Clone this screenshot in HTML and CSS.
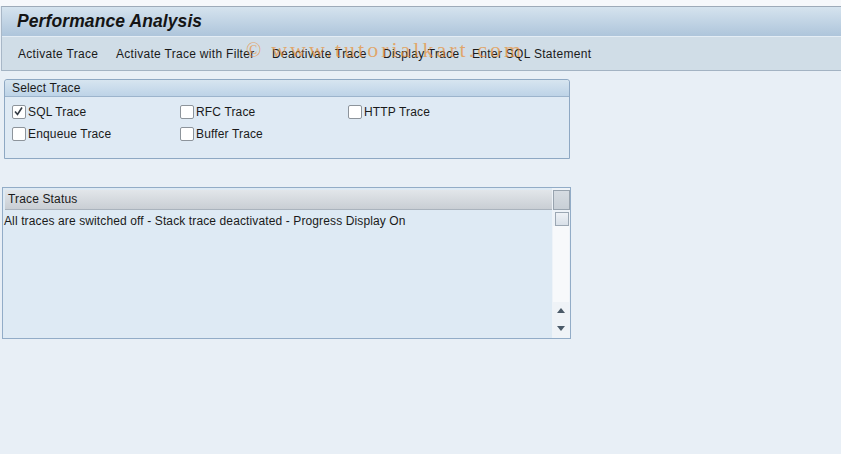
FILE: index.html
```html
<!DOCTYPE html>
<html>
<head>
<meta charset="utf-8">
<title>Performance Analysis</title>
<link rel="stylesheet" href="styles.css">
</head>
<body>
<div class="topgap"></div>
<div class="header">
  <div class="titlebar"><h1 class="title">Performance Analysis</h1></div>
  <div class="toolbar">
    <span class="tool">Activate Trace</span>
    <span class="tool">Activate Trace with Filter</span>
    <span class="tool">Deactivate Trace</span>
    <span class="tool">Display Trace</span>
    <span class="tool">Enter SQL Statement</span>
  </div>
</div>

<div class="content">
  <section class="group">
    <div class="group-head">Select Trace</div>
    <div class="group-body">
      <label class="cb"><span class="box checked"><svg viewBox="0 0 13 13" width="13" height="13"><path d="M3 6.5 L5.5 9.5 L10 2.5" fill="none" stroke="#333b44" stroke-width="1.6"/></svg></span>SQL Trace</label>
      <label class="cb"><span class="box"></span>RFC Trace</label>
      <label class="cb"><span class="box"></span>HTTP Trace</label>
      <label class="cb"><span class="box"></span>Enqueue Trace</label>
      <label class="cb"><span class="box"></span>Buffer Trace</label>
    </div>
  </section>

  <section class="status">
    <div class="status-main">
      <div class="status-head">Trace Status</div>
      <div class="status-line">All traces are switched off - Stack trace deactivated - Progress Display On</div>
    </div>
    <div class="scroll">
      <div class="scroll-corner"></div>
      <div class="scroll-thumb"></div>
      <div class="scroll-track"></div>
      <div class="scroll-btn"><span class="arrow-up"></span></div>
      <div class="scroll-btn"><span class="arrow-down"></span></div>
    </div>
  </section>
</div>

<div class="watermark"><span class="copy">©</span><span class="wm-url">www.tutorialkart.com</span></div>
</body>
</html>
```

FILE: styles.css
```css
html, body {
  margin: 0;
  padding: 0;
}
body {
  width: 841px;
  height: 454px;
  background: #e8eff6;
  font-family: "Liberation Sans", Arial, sans-serif;
  font-size: 12px;
  letter-spacing: 0.15px;
  color: #1a1a1a;
  overflow: hidden;
  position: relative;
}
.topgap {
  height: 6px;
  background: #f6f8fb;
}
.header {
  margin-left: 1px;
  border-top: 1px solid #9eabb9;
  border-left: 1px solid #a8b7c7;
  border-bottom: 1px solid #a3b3c3;
}
.titlebar {
  height: 29px;
  background: linear-gradient(#d5e3ee, #aec5db);
  display: flex;
  align-items: center;
  padding-left: 15px;
}
.title {
  margin: 0;
  font-size: 17.5px;
  font-weight: bold;
  font-style: italic;
  color: #141414;
  letter-spacing: 0.1px;
}
.toolbar {
  border-top: 1px solid #e4edf5;
  height: 33px;
  background: #d0dde7;
  display: grid;
  grid-template-columns: 98px 156px 111px 89px auto;
  align-items: center;
  padding-left: 16px;
}
.tool {
  color: #1a1a1a;
  white-space: nowrap;
  letter-spacing: 0.3px;
}
.content {
  padding: 8px 0 0 0;
}
.group {
  margin-left: 4px;
  width: 564px;
  height: 78px;
  border: 1px solid #8ea8c3;
  border-radius: 3px 3px 0 0;
  background: #dfeaf4;
}
.group-head {
  height: 16px;
  line-height: 16px;
  padding-left: 7px;
  background: linear-gradient(#d7e5f0, #bdd3e7);
  border-bottom: 1px solid #9cb4cc;
  border-radius: 3px 3px 0 0;
}
.group-body {
  display: grid;
  grid-template-columns: 168px 168px auto;
  grid-auto-rows: 22px;
  padding: 8px 0 0 7px;
}
.cb {
  display: flex;
  align-items: center;
  height: 14px;
}
.box {
  width: 12px;
  height: 12px;
  border: 1px solid #8d949b;
  border-radius: 2px;
  background: #fff;
  margin-right: 2px;
  flex: none;
  position: relative;
}
.box svg {
  position: absolute;
  left: -1px;
  top: -1px;
}
.status {
  margin: 28px 0 0 2px;
  width: 567px;
  height: 150px;
  border: 1px solid #92acc7;
  background: #deeaf4;
  display: flex;
}
.status-main {
  flex: 1;
  padding-top: 2px;
}
.status-head {
  margin-left: 2px;
  height: 19px;
  line-height: 19px;
  padding-left: 3px;
  background: linear-gradient(#e2e6ea, #c9ced4);
  border-bottom: 1px solid #aab3bd;
}
.status-line {
  padding-left: 1px;
  margin-top: 4px;
  letter-spacing: 0.12px;
}
.scroll {
  width: 18px;
  padding-top: 2px;
  display: flex;
  flex-direction: column;
  align-items: center;
  background: #eef3f8;
}
.scroll-corner {
  width: 15px;
  height: 18px;
  border: 1px solid #98a3ae;
  background: linear-gradient(#d6dce2, #c8cfd6);
}
.scroll-thumb {
  width: 12px;
  height: 12px;
  margin-top: 2px;
  margin-left: 2px;
  border: 1px solid #9ba7b3;
  background: linear-gradient(#eef2f6, #d8e0e8);
}
.scroll-track {
  width: 16px;
  flex: 1;
  background: #f7f9fb;
}
.scroll-btn {
  width: 16px;
  height: 17px;
  display: flex;
  align-items: center;
  justify-content: center;
  background: #eff3f7;
  margin-bottom: 1px;
}
.arrow-up {
  width: 0;
  height: 0;
  border-left: 4px solid transparent;
  border-right: 4px solid transparent;
  border-bottom: 5px solid #4b5a68;
}
.arrow-down {
  width: 0;
  height: 0;
  border-left: 4px solid transparent;
  border-right: 4px solid transparent;
  border-top: 5px solid #4b5a68;
}
/* watermark overlay lying over the toolbar, as in the source screenshot */
.watermark {
  position: absolute;
  left: 246px;
  top: 37px;
  display: flex;
  align-items: baseline;
  gap: 10px;
  font-family: "Liberation Serif", "Times New Roman", serif;
  color: rgba(232, 142, 52, 0.7);
  white-space: nowrap;
  pointer-events: none;
}
.copy {
  font-size: 20px;
  letter-spacing: 0;
}
.wm-url {
  font-size: 22px;
  letter-spacing: 3px;
}
```
